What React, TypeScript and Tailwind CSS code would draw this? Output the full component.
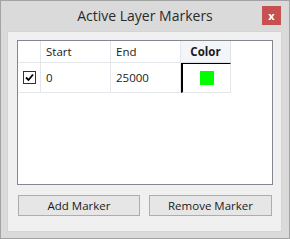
export default function App() {
  return (
    <div className="w-[290px] h-[239px] bg-[#dadada] border border-[#a3a3a3] flex flex-col" style={{ fontFamily: '"Open Sans", "Liberation Sans", sans-serif' }}>
      {/* Title bar */}
      <div className="relative h-[30px] shrink-0 flex items-center justify-center">
        <span className="text-[14px] text-[#2a2a2a] leading-none">Active Layer Markers</span>
        <div className="absolute right-[8px] top-[5px] w-[19px] h-[19px] bg-[#c75050] flex items-center justify-center">
          <span className="text-white text-[11px] font-bold leading-none">x</span>
        </div>
      </div>

      {/* Client area */}
      <div className="ml-[6px] mr-[7px] mb-[6px] flex-1 bg-[#f0f0f0] border border-[#d4d4d4] pl-[9px] pr-[8px] pt-[8px] flex flex-col">
        <div className="h-[145px] bg-white border border-[#828790] text-[11.5px] text-[#1a1a1a]">
          <div className="grid grid-cols-[23px_70px_70px_50px] h-[22px]">
            <div className="border-r border-b border-[#e3e7ec]" />
            <div className="border-r border-b border-[#e3e7ec] pl-[5px] flex items-center">Start</div>
            <div className="border-r border-b border-[#e3e7ec] pl-[5px] flex items-center">End</div>
            <div className="border-r border-b border-[#dfe3e8] bg-[#f3f5f8] flex items-center justify-center font-bold">Color</div>
          </div>
          <div className="grid grid-cols-[23px_70px_70px_50px] h-[30px]">
            <div className="border-r border-b border-[#e3e7ec] flex items-center justify-center">
              <div className="w-[13px] h-[13px] border border-[#333] bg-white flex items-center justify-center">
                <svg width="9" height="9" viewBox="0 0 9 9">
                  <path d="M1 4.5 L3.5 7 L8 1.5" stroke="#000" strokeWidth="1.8" fill="none" />
                </svg>
              </div>
            </div>
            <div className="border-r border-b border-[#e3e7ec] pl-[5px] flex items-center">0</div>
            <div className="border-r border-b border-[#e3e7ec] pl-[5px] flex items-center">25000</div>
            <div className="border-l-2 border-t border-[#000] border-r border-b border-r-[#e3e7ec] border-b-[#e3e7ec] flex items-center justify-center">
              <div className="w-[14px] h-[14px] bg-[#00ff00]" />
            </div>
          </div>
        </div>
        <div className="mt-[10px] flex gap-[9px] pl-[1px]">
          <button className="w-[122px] h-[21px] bg-[#e6e6e6] border border-[#adadad] text-[11.5px] text-[#1a1a1a]">Add Marker</button>
          <button className="w-[123px] h-[21px] bg-[#e6e6e6] border border-[#adadad] text-[11.5px] text-[#1a1a1a]">Remove Marker</button>
        </div>
      </div>
    </div>
  );
}
